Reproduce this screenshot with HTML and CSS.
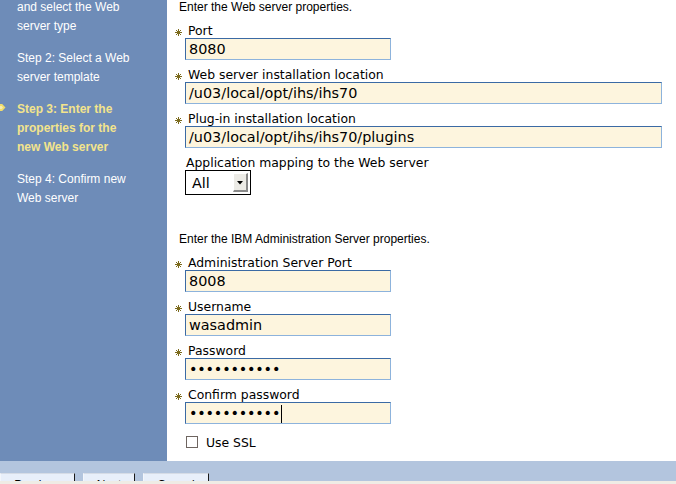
FILE: index.html
```html
<!DOCTYPE html>
<html lang="en">
<head>
<meta charset="utf-8">
<title>New Web server - Step 3</title>
<link rel="stylesheet" href="styles.css">
</head>
<body>
<div class="window">
  <div class="main">
    <nav class="steps">
      <div class="step"><span class="mark"></span><span>and select the Web<br>server type</span></div>
      <div class="step"><span class="mark"></span><span>Step 2: Select a Web<br>server template</span></div>
      <div class="step current"><span class="mark"><svg width="6" height="7" viewBox="0 0 6 7"><path d="M0 0H2.2L5.5 3.5L2.2 7H0Z" fill="#f1dd6c"/><path d="M0 2H1.6L3 3.5L1.6 5H0Z" fill="#f8eeb0"/></svg></span><span>Step 3: Enter the<br>properties for the<br>new Web server</span></div>
      <div class="step"><span class="mark"></span><span>Step 4: Confirm new<br>Web server</span></div>
    </nav>
    <section class="content">
      <p class="intro">Enter the Web server properties.</p>
      <div class="field">
        <div class="label"><span class="req"><svg width="7" height="7" viewBox="0 0 7 7"><path d="M3.5 0V7M0 3.5H7M1 1L6 6M6 1L1 6" stroke="#7b6a1c" stroke-width="1"/></svg></span><span>Port</span></div>
        <div class="input short">8080</div>
      </div>
      <div class="field">
        <div class="label"><span class="req"><svg width="7" height="7" viewBox="0 0 7 7"><path d="M3.5 0V7M0 3.5H7M1 1L6 6M6 1L1 6" stroke="#7b6a1c" stroke-width="1"/></svg></span><span>Web server installation location</span></div>
        <div class="input long">/u03/local/opt/ihs/ihs70</div>
      </div>
      <div class="field">
        <div class="label"><span class="req"><svg width="7" height="7" viewBox="0 0 7 7"><path d="M3.5 0V7M0 3.5H7M1 1L6 6M6 1L1 6" stroke="#7b6a1c" stroke-width="1"/></svg></span><span>Plug-in installation location</span></div>
        <div class="input long">/u03/local/opt/ihs/ihs70/plugins</div>
      </div>
      <div class="field">
        <div class="label plain">Application mapping to the Web server</div>
        <div class="select"><span>All</span><span class="drop"><svg width="6" height="4" viewBox="0 0 6 4"><path d="M0 0H6L3 3.5Z" fill="#000"/></svg></span></div>
      </div>

      <p class="intro admin">Enter the IBM Administration Server properties.</p>
      <div class="field">
        <div class="label"><span class="req"><svg width="7" height="7" viewBox="0 0 7 7"><path d="M3.5 0V7M0 3.5H7M1 1L6 6M6 1L1 6" stroke="#7b6a1c" stroke-width="1"/></svg></span><span>Administration Server Port</span></div>
        <div class="input short">8008</div>
      </div>
      <div class="field">
        <div class="label"><span class="req"><svg width="7" height="7" viewBox="0 0 7 7"><path d="M3.5 0V7M0 3.5H7M1 1L6 6M6 1L1 6" stroke="#7b6a1c" stroke-width="1"/></svg></span><span>Username</span></div>
        <div class="input short">wasadmin</div>
      </div>
      <div class="field">
        <div class="label"><span class="req"><svg width="7" height="7" viewBox="0 0 7 7"><path d="M3.5 0V7M0 3.5H7M1 1L6 6M6 1L1 6" stroke="#7b6a1c" stroke-width="1"/></svg></span><span>Password</span></div>
        <div class="input short dots">•••••••••••</div>
      </div>
      <div class="field">
        <div class="label"><span class="req"><svg width="7" height="7" viewBox="0 0 7 7"><path d="M3.5 0V7M0 3.5H7M1 1L6 6M6 1L1 6" stroke="#7b6a1c" stroke-width="1"/></svg></span><span>Confirm password</span></div>
        <div class="input short dots">•••••••••••<span class="caret"></span></div>
      </div>
      <div class="check"><span class="box"></span><span>Use SSL</span></div>
    </section>
  </div>
  <div class="footer">
    <div class="buttons">
      <button class="btn prev">Previous</button>
      <button class="btn next">Next</button>
      <button class="btn cancel">Cancel</button>
    </div>
    <div class="status"></div>
  </div>
</div>
</body>
</html>
```

FILE: styles.css
```css
html, body {
  margin: 0;
  padding: 0;
}
body {
  width: 676px;
  height: 484px;
  overflow: hidden;
  background: #fff;
}
.window {
  display: flex;
  flex-direction: column;
  height: 484px;
}
.main {
  display: flex;
  height: 461px;
  overflow: hidden;
}

/* sidebar */
.steps {
  width: 167px;
  flex: none;
  background: #6e8cb8;
  color: #fff;
  font: 12px/19px "Liberation Sans", Arial, sans-serif;
  display: flex;
  flex-direction: column;
  gap: 13px;
}
.step {
  display: grid;
  grid-template-columns: 17px 1fr;
}
.step:first-child {
  margin-top: -2px;
}
.step.current {
  color: #f3e48c;
  font-weight: bold;
}
.mark svg {
  display: block;
  margin-top: 4px;
}

/* content */
.content {
  flex: 1;
  display: flex;
  flex-direction: column;
  align-items: flex-start;
  padding-left: 12px;
  font-family: "DejaVu Sans", sans-serif;
  font-size: 12.4px;
  color: #000;
}
.intro {
  margin: 0;
  font: 12px/14px "Liberation Sans", Arial, sans-serif;
}
.intro.admin {
  margin-top: 31px;
}
.field {
  margin: 0 0 6px 6px;
}
.intro + .field {
  margin-top: 8px;
}
.label {
  display: flex;
  align-items: center;
  box-sizing: border-box;
  height: 16px;
  padding-top: 2px;
  line-height: 14px;
  margin-left: -9px;
  white-space: nowrap;
}
.label.plain {
  margin-left: 1px;
}
.req {
  width: 12px;
  flex: none;
}
.req svg {
  display: block;
  margin: 2px 0 0 -1px;
}
.input {
  box-sizing: border-box;
  height: 22px;
  border: 1px solid;
  border-color: #3b6aa4 #8db3dc #8db3dc #3b6aa4;
  background: #fdf5de;
  font-size: 14.4px;
  line-height: 20px;
  padding-left: 3px;
  white-space: nowrap;
  overflow: hidden;
}
.input.short {
  width: 206px;
}
.input.long {
  width: 477px;
}
.dots {
  letter-spacing: -0.2px;
}
.caret {
  display: inline-block;
  width: 1px;
  height: 18px;
  background: #000;
  vertical-align: middle;
  margin-left: 1px;
}
.select {
  box-sizing: border-box;
  width: 66px;
  height: 25px;
  border: 1px solid #000;
  background: #fff;
  display: flex;
  align-items: center;
  justify-content: space-between;
  padding: 0 2px 0 6px;
  font-size: 14.4px;
}
.drop {
  box-sizing: border-box;
  width: 15px;
  height: 19px;
  background: #ecebe6;
  border-style: solid;
  border-width: 1px 2px 2px 1px;
  border-color: #fff #8a8a8a #8a8a8a #fff;
  display: flex;
  align-items: center;
  justify-content: center;
}
.drop svg {
  display: block;
  margin-top: 2px;
}
.check {
  display: flex;
  align-items: flex-start;
  margin: 5px 0 0 7px;
  line-height: 16px;
}
.box {
  box-sizing: border-box;
  width: 12px;
  height: 12px;
  border: 1px solid #6e6560;
  background: #fff;
  margin: 1px 8px 0 0;
}

/* footer */
.footer {
  height: 23px;
  display: flex;
  flex-direction: column;
}
.buttons {
  box-sizing: border-box;
  height: 20px;
  background: #b3c5de;
  padding-top: 12px;
  display: flex;
  align-items: flex-start;
  gap: 8px;
  overflow: hidden;
}
.btn {
  flex: none;
  box-sizing: border-box;
  margin: 0;
  padding: 4px 0 8px;
  background: #e8effa;
  border: 0;
  border-top: 1px solid #d6dce6;
  border-left: 1px solid #f3f6fb;
  border-right: 1px solid #1a1a1a;
  font: 12px/14px "Liberation Sans", Arial, sans-serif;
  color: #000;
  text-align: center;
}
.btn.prev {
  width: 75px;
}
.btn.next {
  width: 52px;
}
.btn.cancel {
  width: 66px;
}
.status {
  height: 3px;
  background: #efece5;
}
```
